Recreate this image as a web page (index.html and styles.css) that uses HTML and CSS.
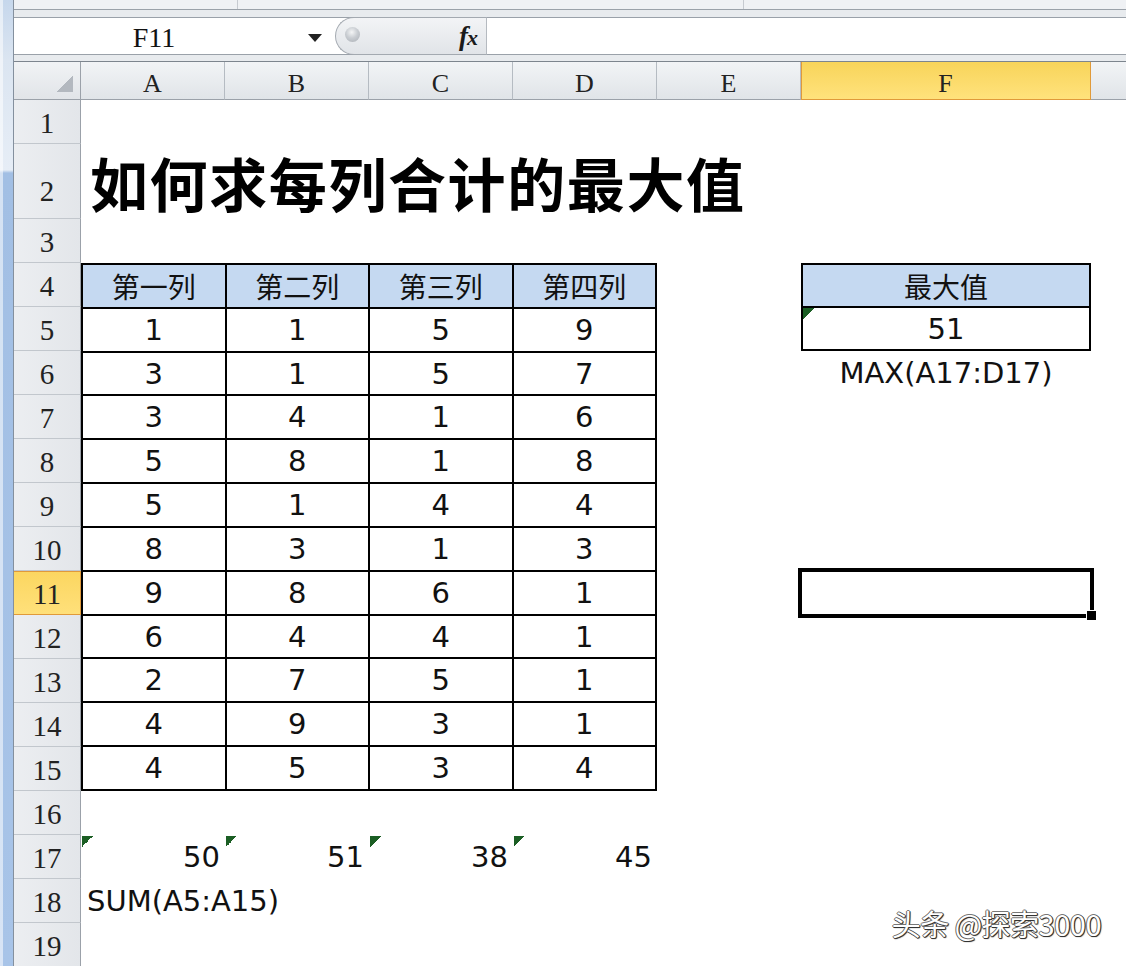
FILE: index.html
```html
<!DOCTYPE html>
<html lang="zh">
<head>
<meta charset="utf-8">
<title>如何求每列合计的最大值</title>
<link rel="stylesheet" href="styles.css">
</head>
<body>
<div class="strip"></div>
<div class="main">
  <div class="topbar"><div class="tb-1"></div><div class="tb-2"></div><div class="tb-3"></div></div>
  <div class="band"></div>
  <div class="fbar">
    <div class="namebox"><span class="nb-text">F11</span><span class="nb-arrow"></span></div>
    <div class="fx-bubble"><span class="fx-dot"></span><span class="fx"><i>f</i><i class="fx-x">x</i></span></div>
    <div class="finput"></div>
  </div>
  <div class="band band2"></div>
  <div class="sheet">
    <div class="corner"><span class="corner-tri"></span></div>
    <div class="ch">A</div>
    <div class="ch">B</div>
    <div class="ch">C</div>
    <div class="ch">D</div>
    <div class="ch">E</div>
    <div class="ch ch-sel">F</div>
    <div class="ch ch-last"></div>

    <div class="rh">1</div>
    <div class="rh rh-tall">2</div>
    <div class="rh">3</div>
    <div class="rh">4</div>
    <div class="rh">5</div>
    <div class="rh">6</div>
    <div class="rh">7</div>
    <div class="rh">8</div>
    <div class="rh">9</div>
    <div class="rh">10</div>
    <div class="rh rh-sel">11</div>
    <div class="rh">12</div>
    <div class="rh">13</div>
    <div class="rh">14</div>
    <div class="rh">15</div>
    <div class="rh">16</div>
    <div class="rh">17</div>
    <div class="rh">18</div>
    <div class="rh">19</div>

    <div class="title">如何求每列合计的最大值</div>

    <div class="table">
      <div class="th">第一列</div><div class="th">第二列</div><div class="th">第三列</div><div class="th">第四列</div>
      <div class="td">1</div><div class="td">1</div><div class="td">5</div><div class="td">9</div>
      <div class="td">3</div><div class="td">1</div><div class="td">5</div><div class="td">7</div>
      <div class="td">3</div><div class="td">4</div><div class="td">1</div><div class="td">6</div>
      <div class="td">5</div><div class="td">8</div><div class="td">1</div><div class="td">8</div>
      <div class="td">5</div><div class="td">1</div><div class="td">4</div><div class="td">4</div>
      <div class="td">8</div><div class="td">3</div><div class="td">1</div><div class="td">3</div>
      <div class="td">9</div><div class="td">8</div><div class="td">6</div><div class="td">1</div>
      <div class="td">6</div><div class="td">4</div><div class="td">4</div><div class="td">1</div>
      <div class="td">2</div><div class="td">7</div><div class="td">5</div><div class="td">1</div>
      <div class="td">4</div><div class="td">9</div><div class="td">3</div><div class="td">1</div>
      <div class="td">4</div><div class="td">5</div><div class="td">3</div><div class="td">4</div>
    </div>

    <div class="maxbox">
      <div class="th">最大值</div>
      <div class="td flag">51</div>
    </div>
    <div class="maxf">MAX(A17:D17)</div>

    <div class="selcell"><span class="handle"></span></div>

    <div class="sums">
      <div class="sum flag">50</div>
      <div class="sum flag">51</div>
      <div class="sum flag">38</div>
      <div class="sum flag">45</div>
    </div>
    <div class="sumf">SUM(A5:A15)</div>
  </div>
</div>
<div class="watermark">头条 @探索3000</div>
</body>
</html>
```

FILE: styles.css
```css
* { box-sizing: border-box; }

body {
  margin: 0;
  width: 1126px;
  height: 966px;
  overflow: hidden;
  display: flex;
  position: relative;
  background: #fff;
  font-family: "DejaVu Sans", "Noto Sans CJK SC", sans-serif;
  color: #111;
}

.strip {
  width: 14px;
  flex: none;
  border-right: 1px solid #84909e;
  background: linear-gradient(to bottom, #c6d7ec 0, #dbe5f1 60px, #e6edf6 170px, #a2bfe4 173px, #a8c4e8 100%);
  box-shadow: inset 3px 0 0 rgba(255, 255, 255, 0.55);
}

.main {
  flex: 1;
  min-width: 0;
  display: flex;
  flex-direction: column;
}

.topbar {
  height: 10px;
  flex: none;
  display: flex;
  background: #eff1f4;
  border-bottom: 1px solid #9aa1a9;
}
.tb-1 { width: 224px; border-right: 1px solid #c6cad0; }
.tb-2 { width: 506px; border-right: 1px solid #c6cad0; }
.tb-3 { flex: 1; }

.band {
  height: 8px;
  flex: none;
  background: #e8ebee;
  border-bottom: 1px solid #9aa1a9;
}
.band2 {
  height: 7px;
  border-bottom: 1px solid #7d858e;
}

.fbar {
  height: 37px;
  flex: none;
  display: flex;
  background: #fff;
  border-bottom: 1px solid #9aa1a9;
}

.namebox {
  width: 321px;
  display: flex;
  align-items: center;
}
.nb-text {
  width: 280px;
  text-align: center;
  font: 28px "Liberation Serif", serif;
  color: #111;
  padding-top: 3px;
}
.nb-arrow {
  margin-left: 14px;
  margin-top: 3px;
  width: 0;
  height: 0;
  border-left: 7px solid transparent;
  border-right: 7px solid transparent;
  border-top: 8px solid #222;
}

.fx-bubble {
  width: 152px;
  display: flex;
  align-items: center;
  justify-content: space-between;
  border: 1px solid #a3a9b0;
  border-right-color: #b5bac0;
  border-radius: 19px 0 0 19px;
  background: linear-gradient(to bottom, #f3f4f6, #e1e4e8);
  padding: 0 9px 0 9px;
  margin: -1px 0;
}
.fx-dot {
  width: 15px;
  height: 15px;
  border-radius: 50%;
  background: radial-gradient(circle at 45% 35%, #f4f5f6 0, #c9cdd2 45%, #a9aeb4 100%);
  margin-top: -4px;
}
.fx {
  font: italic bold 27px "Liberation Serif", serif;
  color: #1a1a1a;
  letter-spacing: -1px;
}
.fx-x { font-size: 22px; }

.finput {
  flex: 1;
  background: #fff;
}

.sheet {
  display: grid;
  grid-template-columns: 67px repeat(5, 144px) 290px 1fr;
  grid-template-rows: 38px 44px 75px 44px repeat(16, 44px);
}

.corner {
  grid-row: 1;
  grid-column: 1;
  background: linear-gradient(#f1f3f5, #e1e4e8);
  border-right: 1px solid #9ba1a9;
  border-bottom: 1px solid #9ba1a9;
  display: flex;
  justify-content: flex-end;
  align-items: flex-end;
  padding: 0 7px 7px 0;
}
.corner-tri {
  width: 17px;
  height: 17px;
  background: linear-gradient(135deg, transparent 50%, #b3b8bf 50%);
}

.ch {
  grid-row: 1;
  display: flex;
  align-items: center;
  justify-content: center;
  padding-top: 6px;
  background: linear-gradient(#f2f4f6, #e0e4e8);
  border-right: 1px solid #b5bbc2;
  border-bottom: 1px solid #9ba1a9;
  font: 26px "Liberation Serif", serif;
  color: #222;
}
.ch-sel {
  background: linear-gradient(#f8d45a, #ffe27c);
  border-right-color: #e09a3a;
  border-bottom-color: #e09a3a;
  box-shadow: inset 1px 0 0 #e09a3a;
}
.ch-last { border-right: none; }

.rh {
  grid-column: 1;
  display: flex;
  align-items: center;
  justify-content: center;
  padding-top: 3px;
  background: linear-gradient(to right, #eceef1, #e3e6ea);
  border-right: 1px solid #9ba1a9;
  border-bottom: 1px solid #c2c7cd;
  font: 29px "Liberation Serif", serif;
  color: #222;
}
.rh-tall {
  align-items: flex-end;
  padding-bottom: 10px;
}
.rh-sel {
  background: linear-gradient(#fbd660, #ffe07a);
  border-right-color: #e09a3a;
  border-bottom-color: #e09a3a;
  box-shadow: inset 0 1px 0 #e09a3a;
}

.title {
  grid-row: 3;
  grid-column: 2 / 8;
  display: flex;
  align-items: center;
  padding-left: 9px;
  font-family: "Noto Sans CJK SC", sans-serif;
  font-weight: 700;
  font-size: 58px;
  letter-spacing: 1.6px;
  color: #000;
}

.table {
  grid-row: 5 / 17;
  grid-column: 2 / 6;
  display: grid;
  grid-template-columns: repeat(4, 1fr);
  grid-auto-rows: 1fr;
  gap: 2px;
  padding: 2px;
  background: #000;
}

.th {
  background: #c5d9f1;
  display: flex;
  align-items: center;
  justify-content: center;
  font-family: "Noto Sans CJK SC", sans-serif;
  font-size: 28px;
  color: #111;
}
.td {
  background-color: #fff;
  display: flex;
  align-items: center;
  justify-content: center;
  font-size: 29px;
  color: #111;
}

.flag {
  background-image: linear-gradient(135deg, #1b5e24 50%, transparent 50%);
  background-size: 11px 11px;
  background-repeat: no-repeat;
  background-position: 1px 1px;
}

.maxbox {
  grid-row: 5 / 7;
  grid-column: 7;
  display: grid;
  grid-template-rows: 1fr 1fr;
  gap: 2px;
  padding: 2px;
  background: #000;
}
.maxbox .flag { background-position: 0 0; }

.maxf {
  grid-row: 7;
  grid-column: 7;
  display: flex;
  align-items: center;
  justify-content: center;
  font-size: 29px;
}

.selcell {
  grid-row: 12;
  grid-column: 7;
  position: relative;
}
.selcell::before {
  content: "";
  position: absolute;
  inset: -3px;
  border: 4px solid #000;
}
.handle {
  position: absolute;
  right: -6px;
  bottom: -6px;
  width: 11px;
  height: 11px;
  background: #000;
  border: 1px solid #fff;
}

.sums {
  grid-row: 18;
  grid-column: 2 / 6;
  display: grid;
  grid-template-columns: repeat(4, 1fr);
}
.sum {
  display: flex;
  align-items: center;
  justify-content: flex-end;
  padding-right: 5px;
  font-size: 29px;
}

.sumf {
  grid-row: 19;
  grid-column: 2 / 5;
  display: flex;
  align-items: center;
  padding-left: 6px;
  font-size: 29px;
}

.watermark {
  position: absolute;
  right: 25px;
  bottom: 22px;
  font-family: "Noto Sans CJK SC", sans-serif;
  font-size: 29px;
  color: #fff;
  text-shadow: 1px 0 0 #333, -1px 0 0 #666, 0 1px 0 #333, 0 -1px 0 #777, 1px 1px 1px #222;
  letter-spacing: -0.5px;
}
```
